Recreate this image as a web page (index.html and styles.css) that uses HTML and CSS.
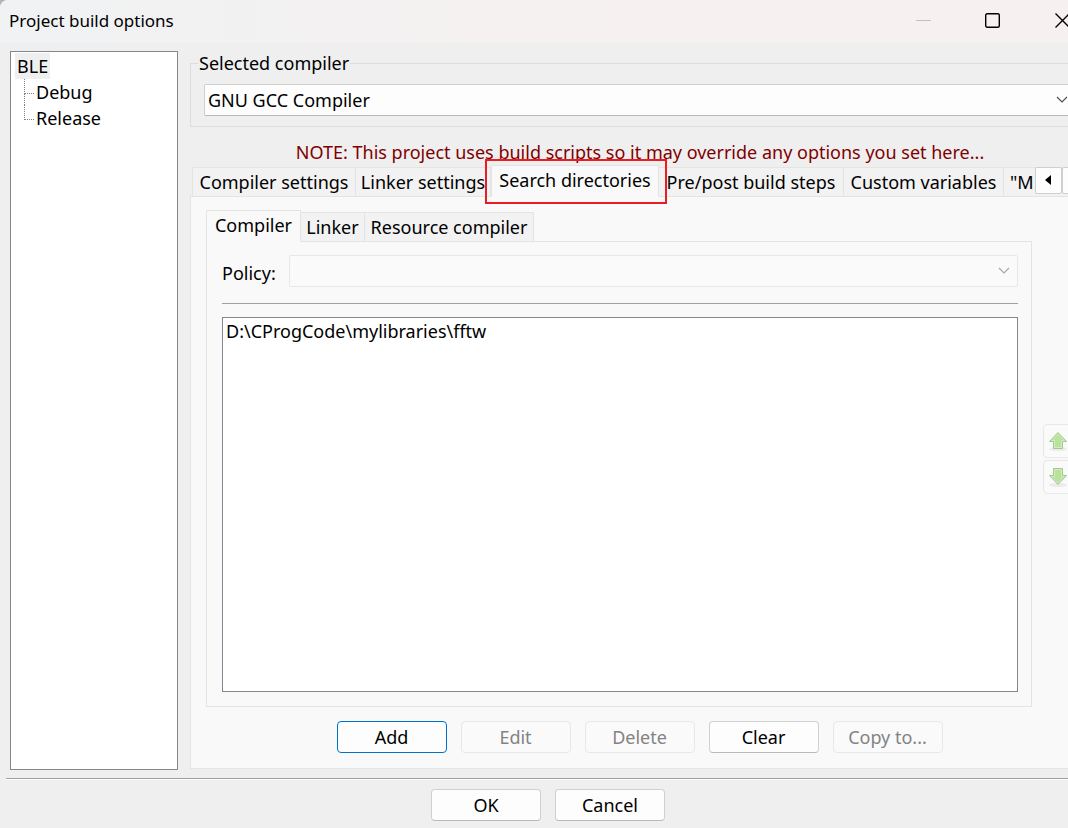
FILE: index.html
```html
<!DOCTYPE html>
<html lang="en">
<head>
  <meta charset="UTF-8">
  <meta name="viewport" content="width=device-width, initial-scale=1.0">
  <title>Project build options</title>
  <link rel="stylesheet" href="styles.css">
</head>
<body>

  <div class="window">
    <header class="titlebar">
      <h1>Project build options</h1>
      <div class="window-controls">
        <button type="button" aria-label="Minimize" disabled>
          <svg width="16" height="16" viewBox="0 0 16 16"><path d="M0 7.5h15" stroke="#c4bfbf" fill="none"/></svg>
        </button>
        <button type="button" aria-label="Maximize">
          <svg width="16" height="16" viewBox="0 0 16 16"><rect x="0.7" y="0.7" width="13.6" height="13.6" rx="1.5" stroke="#000" stroke-width="1.4" fill="none"/></svg>
        </button>
        <button type="button" aria-label="Close">
          <svg width="16" height="16" viewBox="0 0 16 16"><path d="M1.500 .5l14 14M15.500 .5l-14 14" stroke="#000" stroke-width="1.4" fill="none"/></svg>
        </button>
      </div>
    </header>

    <main class="content">
      <nav class="tree">
        <ul>
          <li>
            <span class="selected">BLE</span>
            <ul class="children">
              <li>Debug</li>
              <li>Release</li>
            </ul>
          </li>
        </ul>
      </nav>

      <div class="settings">
        <fieldset class="compiler">
          <legend>Selected compiler</legend>
          <div class="combo">
            <select aria-label="Selected compiler">
              <option>GNU GCC Compiler</option>
            </select>
            <svg class="chevron" width="12" height="8" viewBox="0 0 12 8"><path d="M1 1l5 5 5-5"/></svg>
          </div>
        </fieldset>

        <p class="note">NOTE: This project uses build scripts so it may override any options you set here...</p>

        <div class="tabs main-tabs" role="tablist">
          <button type="button" role="tab">Compiler settings</button>
          <button type="button" role="tab">Linker settings</button>
          <button type="button" role="tab" class="active highlight" aria-selected="true">Search directories</button>
          <button type="button" role="tab">Pre/post build steps</button>
          <button type="button" role="tab">Custom variables</button>
          <button type="button" role="tab">"M</button>
          <div class="tab-scroll">
            <button type="button" aria-label="Scroll left">
              <svg width="6" height="10" viewBox="0 0 6 10"><path d="M6 0v10L0 5z" fill="#000"/></svg>
            </button>
            <button type="button" aria-label="Scroll right">
              <svg width="6" height="10" viewBox="0 0 6 10"><path d="M0 0v10l6-5z" fill="#000"/></svg>
            </button>
          </div>
        </div>

        <section class="panel">
          <div class="panel-row">
            <div class="directories">
              <div class="tabs sub-tabs" role="tablist">
                <button type="button" role="tab" class="active" aria-selected="true">Compiler</button>
                <button type="button" role="tab">Linker</button>
                <button type="button" role="tab">Resource compiler</button>
              </div>
              <div class="sub-panel">
                <div class="policy">
                  <label for="policy">Policy:</label>
                  <div class="combo disabled">
                    <select id="policy" disabled></select>
                    <svg class="chevron" width="12" height="8" viewBox="0 0 12 8"><path d="M1 1l5 5 5-5"/></svg>
                  </div>
                </div>
                <hr>
                <select class="path-list" size="2" aria-label="Search directories">
                  <option>D:\CProgCode\mylibraries\fftw</option>
                </select>
              </div>
            </div>

            <div class="move-buttons">
              <button type="button" aria-label="Move up" disabled>
                <svg width="20" height="20" viewBox="0 0 20 20">
                  <ellipse cx="10" cy="18" rx="9" ry="2" fill="#ececec"/>
                  <path d="M10 1.5l8.5 9h-4v7h-9v-7h-4z" fill="#b9e29b" stroke="#a3c993"/>
                  <path d="M10 3l6.2 6.500H13.500v7h-7v-7H3.800z" fill="none" stroke="#d0ecc0"/>
                </svg>
              </button>
              <button type="button" aria-label="Move down" disabled>
                <svg width="20" height="20" viewBox="0 0 20 20">
                  <ellipse cx="10" cy="18" rx="9" ry="2" fill="#ececec"/>
                  <path d="M10 17.5l8.500-9h-4v-7h-9v7h-4z" fill="#b9e29b" stroke="#a3c993"/>
                  <path d="M10 16l6.200-6.500H13.500v-7h-7v7H3.800z" fill="none" stroke="#d0ecc0"/>
                </svg>
              </button>
            </div>
          </div>

          <div class="actions">
            <button type="button" class="btn default">Add</button>
            <button type="button" class="btn" disabled>Edit</button>
            <button type="button" class="btn" disabled>Delete</button>
            <button type="button" class="btn">Clear</button>
            <button type="button" class="btn" disabled>Copy to...</button>
          </div>
        </section>
      </div>
    </main>

    <footer class="footer">
      <button type="button" class="btn">OK</button>
      <button type="button" class="btn">Cancel</button>
    </footer>
  </div>

</body>
</html>
```
FILE: styles.css
```css
* {
  box-sizing: border-box;
}

body {
  margin: 0;
  overflow: hidden;
  background-color: #b4b4b4;
  color: #000;
  font-family: "Noto Sans", "Open Sans", sans-serif;
  font-size: 18px;
  line-height: 24px;
}

button,
select {
  font: inherit;
  color: inherit;
}

ul {
  list-style: none;
  margin: 0;
  padding: 0;
}

/* the dialog runs a little past the right edge of the screen */
.window {
  display: flex;
  flex-direction: column;
  width: calc(100% + 28px);
  height: 100vh;
  background-color: #efefef;
  border-radius: 8px 0 0 0;
  overflow: hidden;
}

.titlebar {
  display: flex;
  justify-content: space-between;
  align-items: center;
  height: 43px;
  padding: 0 0 2px 9px;
  background: linear-gradient(to right, #f0f2f3, #f6f0f0 60%);
}

.titlebar h1 {
  margin: 0;
  font-size: 17px;
  font-weight: normal;
}

.window-controls {
  display: flex;
}

.window-controls button {
  display: flex;
  align-items: center;
  justify-content: center;
  width: 69px;
  height: 40px;
  padding: 0;
  border: none;
  background: none;
}

.content {
  flex: 1;
  display: flex;
  gap: 12px;
  min-height: 0;
  padding: 8px 6px 8px 10px;
}

.tree {
  width: 168px;
  padding: 1px 4px;
  border: 1px solid #828790;
  background-color: #fff;
  line-height: 26px;
}

.tree .selected {
  display: inline-block;
  padding: 0 2px;
  background-color: #efefef;
}

.children {
  margin-left: 9px;
}

.children li {
  position: relative;
  padding-left: 12px;
}

.children li::before {
  content: "";
  position: absolute;
  left: 0;
  top: 0;
  width: 9px;
  height: 14px;
  border-left: 1px dotted #808080;
  border-bottom: 1px dotted #808080;
}

.children li:not(:last-child)::after {
  content: "";
  position: absolute;
  left: 0;
  top: 14px;
  height: 12px;
  border-left: 1px dotted #808080;
}

.settings {
  flex: 1;
  display: flex;
  flex-direction: column;
  min-width: 0;
  padding-bottom: 1px;
}

.compiler {
  margin: 0;
  padding: 9px 13px 10px;
  border: 1px solid #dcdcdc;
}

.compiler legend {
  margin-left: -6px;
  padding: 0 1px;
}

.combo {
  position: relative;
  flex: 1;
}

.combo select {
  display: block;
  appearance: none;
  width: 100%;
  height: 32px;
  padding: 0 28px 0 3px;
  border: 1px solid #cfcfcf;
  border-bottom-color: #b8b8b8;
  border-radius: 2px;
  background-color: #fdfdfd;
}

.combo.disabled select {
  border-color: #e8e8e8;
  background-color: #fafafa;
  opacity: 1;
}

.chevron {
  position: absolute;
  right: 8px;
  top: 12px;
  pointer-events: none;
}

.chevron path {
  fill: none;
  stroke: #505050;
  stroke-width: 1.2;
}

.disabled .chevron path {
  stroke: #a8a8a8;
}

.note {
  margin: 13px 0 0;
  color: #800000;
  text-align: center;
  white-space: nowrap;
}

.tabs {
  display: grid;
  align-items: end;
  position: relative;
  margin-bottom: -1px;
}

.tabs > button {
  height: 30px;
  padding: 0;
  border: 1px solid #e4e4e4;
  border-left: none;
  background-color: #f2f2f2;
  white-space: nowrap;
}

.tabs > button:first-child {
  border-left: 1px solid #e4e4e4;
}

.tabs > .active {
  position: relative;
  z-index: 1;
  height: 32px;
  padding-bottom: 2px;
  border-left: 1px solid #e4e4e4;
  border-bottom-color: #f9f9f9;
  background-color: #f9f9f9;
}

.main-tabs {
  grid-template-columns: 164px 135px 168px 185px 160px 1fr;
  margin-top: 1px;
  padding-left: 2px;
}

.main-tabs > button:nth-child(6) {
  padding-left: 6px;
  text-align: left;
}

.sub-tabs {
  grid-template-columns: 95px 64px 169px;
}

/* red marker around the tab */
.highlight::after {
  content: "";
  position: absolute;
  inset: -7px -9px -8px -7px;
  border: 2px solid #ec1c24;
}

.tab-scroll {
  display: flex;
  position: absolute;
  right: 1px;
  top: 2px;
}

.tab-scroll button {
  display: flex;
  align-items: center;
  justify-content: center;
  width: 27px;
  height: 27px;
  padding: 0 2px 2px 0;
  border: 1px solid #cfcfcf;
  border-radius: 2px;
  background-color: #fdfdfd;
}

.panel {
  flex: 1;
  display: flex;
  flex-direction: column;
  gap: 14px;
  min-height: 0;
  padding: 13px 12px 15px 15px;
  border: 1px solid #e4e4e4;
  background-color: #f9f9f9;
}

.panel-row {
  flex: 1;
  display: flex;
  align-items: center;
  gap: 11px;
  min-height: 0;
}

.directories {
  flex: 1;
  align-self: stretch;
  display: flex;
  flex-direction: column;
}

.sub-panel {
  flex: 1;
  display: flex;
  flex-direction: column;
  padding: 13px 13px 14px 15px;
  border: 1px solid #e4e4e4;
}

.policy {
  display: flex;
  align-items: center;
}

.policy label {
  width: 67px;
  padding-top: 3px;
}

.sub-panel hr {
  width: 100%;
  margin: 16px 0 13px;
  border: none;
  border-top: 1px solid #a0a0a0;
}

.path-list {
  flex: 1;
  padding: 0;
  border: 1px solid #828790;
  border-radius: 0;
  background-color: #fff;
  overflow: hidden;
}

.path-list option {
  padding: 1px 3px;
  line-height: 24px;
}

.move-buttons {
  display: flex;
  flex-direction: column;
  gap: 2px;
}

.move-buttons button {
  display: flex;
  align-items: center;
  justify-content: center;
  width: 34px;
  height: 34px;
  padding: 0 4px 0 0;
  border: 1px solid #e8e8e8;
  border-radius: 4px;
  background-color: #fafafa;
}

.actions {
  display: flex;
  justify-content: center;
  gap: 14px;
  padding-right: 4px;
}

.btn {
  width: 110px;
  height: 32px;
  padding: 0;
  border: 1px solid #d0d0d0;
  border-bottom-color: #bababa;
  border-radius: 4px;
  background-color: #fdfdfd;
}

.btn.default {
  border-color: #0070c8;
}

.btn:disabled {
  border-color: #e8e8e8;
  background-color: #fafafa;
  color: #838383;
}

.footer {
  display: flex;
  justify-content: center;
  gap: 14px;
  margin-left: 6px;
  padding: 10px 6px 7px 0;
  border-top: 1px solid #a0a0a0;
  box-shadow: inset 0 1px #fff;
}
```
